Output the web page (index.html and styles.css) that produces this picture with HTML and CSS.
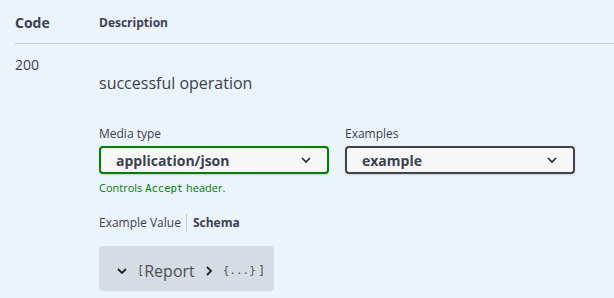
FILE: index.html
```html
<!DOCTYPE html>
<html>
<head>
<meta charset="utf-8">
<link rel="stylesheet" href="styles.css">
</head>
<body>
<div class="responses">
  <div class="head-row">
    <div class="col-code">Code</div>
    <div class="col-desc">Description</div>
  </div>
  <div class="resp-row">
    <div class="col-code code-val">200</div>
    <div class="col-desc">
      <p class="desc">successful operation</p>
      <div class="controls">
        <div class="control">
          <div class="label">Media type</div>
          <div class="select select-green">
            <span>application/json</span>
            <svg class="chev" width="10" height="6" viewBox="0 0 10 6"><path d="M1 1l4 4 4-4" fill="none" stroke="#222" stroke-width="1.6"/></svg>
          </div>
          <div class="accept">Controls <code>Accept</code> header.</div>
        </div>
        <div class="control">
          <div class="label">Examples</div>
          <div class="select select-dark">
            <span>example</span>
            <svg class="chev" width="10" height="6" viewBox="0 0 10 6"><path d="M1 1l4 4 4-4" fill="none" stroke="#222" stroke-width="1.6"/></svg>
          </div>
        </div>
      </div>
      <div class="tabs">
        <span class="tab">Example Value</span>
        <span class="tab active">Schema</span>
      </div>
      <div class="model-box">
        <svg class="mchev" width="10" height="6" viewBox="0 0 10 6"><path d="M1 1l4 4 4-4" fill="none" stroke="#222" stroke-width="1.8"/></svg>
        <span class="bracket">[</span><span class="model-title">Report</span>
        <svg class="rchev" width="6" height="10" viewBox="0 0 6 10"><path d="M1 1l4 4-4 4" fill="none" stroke="#222" stroke-width="1.8"/></svg>
        <span class="braces">{...}</span><span class="bracket">]</span>
      </div>
    </div>
  </div>
</div>
</body>
</html>
```
FILE: styles.css
```css
html, body {
  margin: 0;
  padding: 0;
  background: #ebf3fb;
  font-family: "Open Sans", "Noto Sans", sans-serif;
  color: #3b4151;
}
.responses {
  padding-left: 15px;
}
.head-row {
  display: flex;
  height: 44px;
  align-items: center;
  border-bottom: 1px solid #c6cdd8;
  padding-top: 2px;
  box-sizing: border-box;
  font-weight: 700;
}
.col-code {
  width: 84px;
  flex: none;
}
.head-row .col-code {
  font-size: 14px;
}
.head-row .col-desc {
  font-size: 12px;
}
.resp-row {
  display: flex;
}
.code-val {
  font-size: 14px;
  padding-top: 11px;
  line-height: 20px;
}
.col-desc {
  flex: 1;
}
.desc {
  margin: 28px 0 0;
  font-size: 16px;
  line-height: 22px;
}
.controls {
  display: flex;
  gap: 16px;
  margin-top: 32px;
}
.control {
  width: 230px;
}
.label {
  font-size: 12px;
  line-height: 16px;
  margin-bottom: 4px;
}
.select {
  height: 28px;
  box-sizing: border-box;
  border-radius: 4px;
  background: #f7f7f7;
  display: flex;
  align-items: center;
  justify-content: space-between;
  padding: 0 16px 0 15px;
  font-size: 14px;
  font-weight: 700;
  box-shadow: 0 1px 2px rgba(0,0,0,.15);
}
.select-green {
  border: 2px solid #008000;
}
.select-dark {
  border: 2px solid #41444e;
}
.accept {
  color: #008000;
  font-size: 11px;
  margin-top: 6px;
  line-height: 16px;
}
.accept code {
  font-family: "DejaVu Sans Mono", monospace;
  font-size: 10.5px;
}
.tabs {
  display: flex;
  align-items: center;
  margin-top: 18px;
  font-size: 12px;
  line-height: 18px;
}
.tab {
  padding-right: 5px;
}
.tab.active {
  font-weight: 700;
  border-left: 1px solid #c6cdd8;
  padding-left: 6px;
  margin-left: 0;
}
.model-box {
  margin-top: 14px;
  width: 175px;
  height: 45px;
  box-sizing: border-box;
  background: #d5dce3;
  border-radius: 4px;
  display: flex;
  align-items: center;
  padding-left: 18px;
  padding-top: 4px;
}
.mchev {
  margin-right: 10px;
}
.bracket {
  font-family: "DejaVu Sans Mono", monospace;
  font-size: 12px;
  color: #555;
}
.model-title {
  font-size: 16px;
  color: #505050;
  margin-right: 11px;
}
.rchev {
  margin-right: 11px;
}
.braces {
  font-family: "DejaVu Sans Mono", monospace;
  font-size: 11px;
  color: #555;
  margin-right: 2px;
}
```
